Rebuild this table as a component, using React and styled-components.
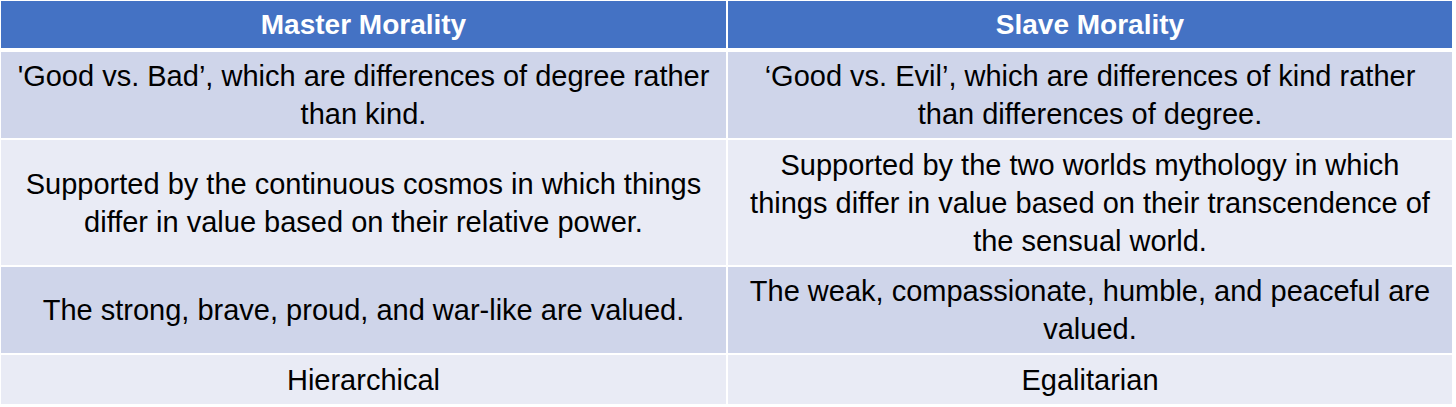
import React from "react";
import styled, { createGlobalStyle } from "styled-components";

const GlobalStyle = createGlobalStyle`
  html, body {
    margin: 0;
    padding: 0;
    background: #ffffff;
  }
  body {
    font-family: "Liberation Sans", Arial, sans-serif;
  }
`;

const Table = styled.div`
  display: flex;
  flex-direction: column;
  gap: 2px;
  padding: 1px 0 0 1px;
  width: 1451px;
`;

const Row = styled.div`
  display: grid;
  grid-template-columns: 725px 724px;
  column-gap: 2px;
  height: ${(p) => p.$height}px;
  margin-bottom: ${(p) => (p.$header ? 2 : 0)}px;
`;

const Cell = styled.div`
  display: flex;
  align-items: center;
  justify-content: center;
  text-align: center;
  padding: 0 8px;
  white-space: nowrap;
  font-size: ${(p) => (p.$header ? 28 : 29)}px;
  line-height: 38px;
  color: ${(p) => (p.$header ? "#ffffff" : "#000000")};
  font-weight: ${(p) => (p.$header ? 700 : 400)};
  background: ${(p) =>
    p.$header ? "#4472c4" : p.$odd ? "#cfd5ea" : "#e9ebf5"};
`;

const rows = [
  {
    height: 86,
    left: ["'Good vs. Bad’, which are differences of degree rather", "than kind."],
    right: ["‘Good vs. Evil’, which are differences of kind rather", "than differences of degree."],
  },
  {
    height: 125,
    left: ["Supported by the continuous cosmos in which things", "differ in value based on their relative power."],
    right: [
      "Supported by the two worlds mythology in which",
      "things differ in value based on their transcendence of",
      "the sensual world.",
    ],
  },
  {
    height: 86,
    left: ["The strong, brave, proud, and war-like are valued."],
    right: ["The weak, compassionate, humble, and peaceful are", "valued."],
  },
  {
    height: 49,
    left: ["Hierarchical"],
    right: ["Egalitarian"],
  },
];

function Lines({ lines }) {
  return (
    <span>
      {lines.map((l, i) => (
        <React.Fragment key={i}>
          {i > 0 && <br />}
          {l}
        </React.Fragment>
      ))}
    </span>
  );
}

export default function App() {
  return (
    <>
      <GlobalStyle />
      <Table>
        <Row $height={47} $header>
          <Cell $header>Master Morality</Cell>
          <Cell $header>Slave Morality</Cell>
        </Row>
        {rows.map((r, i) => (
          <Row key={i} $height={r.height}>
            <Cell $odd={i % 2 === 0}>
              <Lines lines={r.left} />
            </Cell>
            <Cell $odd={i % 2 === 0}>
              <Lines lines={r.right} />
            </Cell>
          </Row>
        ))}
      </Table>
    </>
  );
}
